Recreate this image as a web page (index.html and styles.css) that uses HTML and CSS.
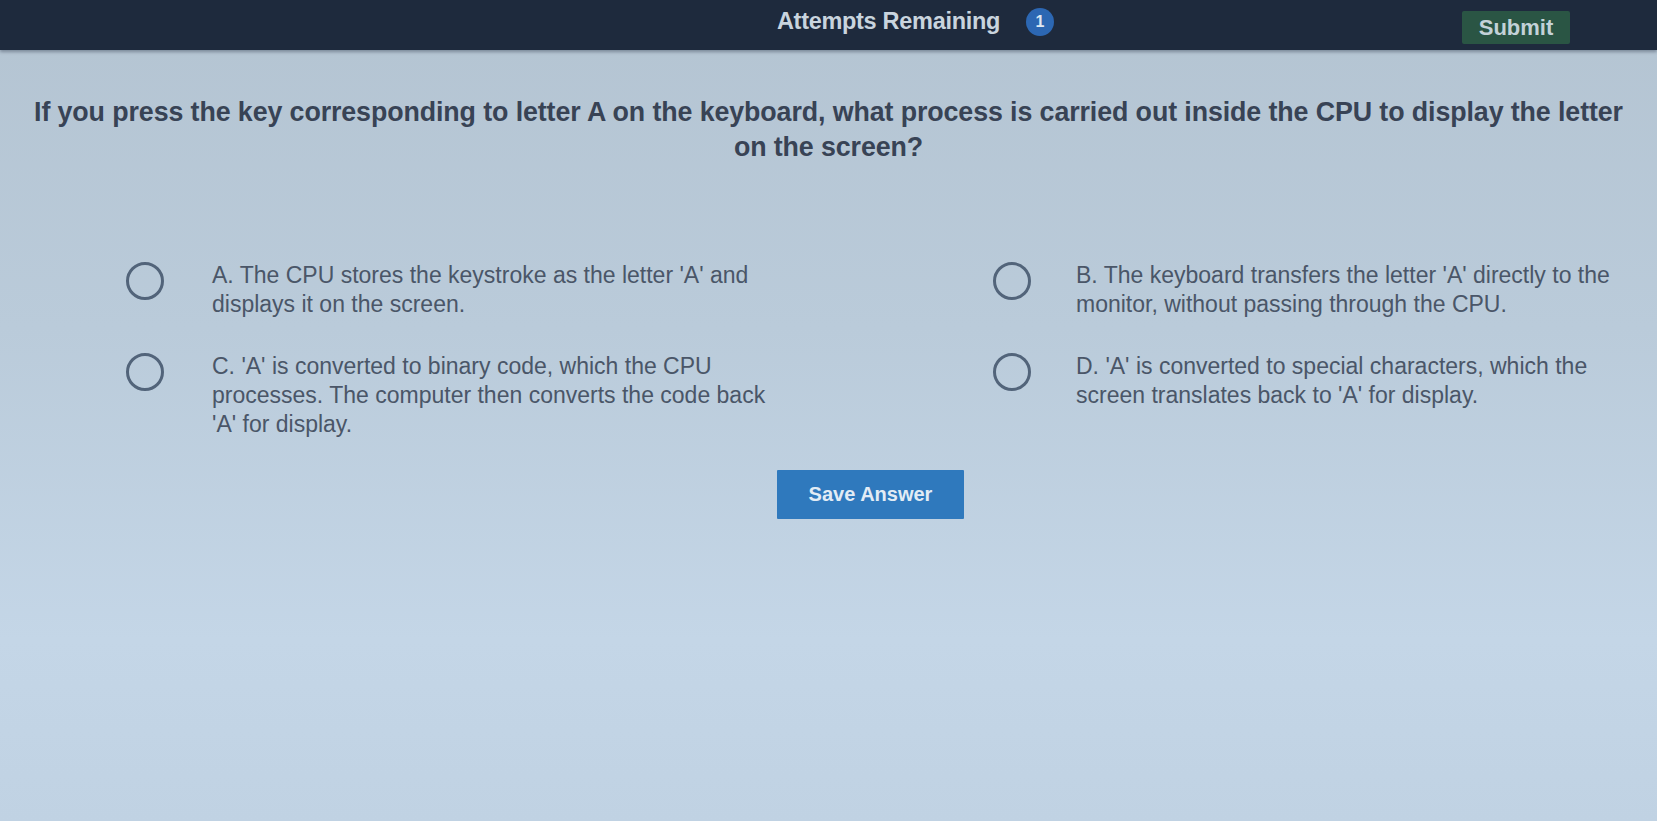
FILE: index.html
```html
<!DOCTYPE html>
<html>
<head>
<meta charset="utf-8">
<link rel="stylesheet" href="styles.css">
</head>
<body>
<header class="topbar">
  <div class="attempts">
    <span class="attempts-label">Attempts Remaining</span>
    <span class="badge">1</span>
  </div>
  <button class="submit">Submit</button>
</header>
<main class="content">
  <h1 class="question">If you press the key corresponding to letter A on the keyboard, what process is carried out inside the CPU to display the letter on the screen?</h1>
  <div class="options">
    <label class="option">
      <span class="radio"></span>
      <span class="opt-text">A. The CPU stores the keystroke as the letter 'A' and displays it on the screen.</span>
    </label>
    <label class="option option-right">
      <span class="radio"></span>
      <span class="opt-text">B. The keyboard transfers the letter 'A' directly to the monitor, without passing through the CPU.</span>
    </label>
    <label class="option">
      <span class="radio"></span>
      <span class="opt-text">C. 'A' is converted to binary code, which the CPU processes. The computer then converts the code back 'A' for display.</span>
    </label>
    <label class="option option-right">
      <span class="radio"></span>
      <span class="opt-text">D. 'A' is converted to special characters, which the screen translates back to 'A' for display.</span>
    </label>
  </div>
  <div class="actions">
    <button class="save">Save Answer</button>
  </div>
</main>
</body>
</html>
```
FILE: styles.css
```css
* { box-sizing: border-box; }
html, body { height: 100%; }
body {
  margin: 0;
  font-family: "Liberation Sans", Arial, sans-serif;
  background: linear-gradient(180deg, #b4c4d2 0%, #bacbda 40%, #c4d6e7 78%, #c0d2e3 100%);
  color: #3b4658;
  overflow: hidden;
}
.topbar {
  height: 50px;
  background: #1e2a3d;
  display: flex;
  align-items: center;
  justify-content: center;
  position: relative;
  box-shadow: 0 2px 3px rgba(20, 30, 50, 0.35);
}
.attempts {
  display: flex;
  align-items: center;
  gap: 26px;
  margin-left: 174px;
  margin-top: -7px;
}
.attempts-label {
  color: #c9d4de;
  font-weight: bold;
  font-size: 23.5px;
  letter-spacing: -0.3px;
}
.badge {
  width: 28px;
  height: 28px;
  border-radius: 50%;
  background: #2c67b3;
  color: #dfe8f2;
  font-weight: bold;
  font-size: 16px;
  display: flex;
  align-items: center;
  justify-content: center;
}
.submit {
  position: absolute;
  right: 87px;
  top: 11px;
  width: 108px;
  height: 33px;
  background: #2a5544;
  color: #c3d2d8;
  font-family: "Liberation Sans", Arial, sans-serif;
  font-weight: bold;
  font-size: 22px;
  border: none;
  border-radius: 2px;
}
.content {
  padding: 45px 20px 0 20px;
}
.question {
  margin: 0 auto;
  max-width: 1610px;
  text-align: center;
  font-size: 26.8px;
  line-height: 35px;
  font-weight: bold;
  color: #384355;
  letter-spacing: -0.1px;
}
.options {
  display: grid;
  grid-template-columns: 867px 640px;
  row-gap: 33px;
  margin: 96px 0 0 106px;
}
.option {
  display: flex;
  align-items: flex-start;
  gap: 48px;
}
.option-right {
  gap: 45px;
}
.radio {
  flex: none;
  width: 38px;
  height: 38px;
  border: 3px solid #52647a;
  border-radius: 50%;
  margin-top: 1px;
}
.opt-text {
  width: 565px;
  font-size: 23px;
  line-height: 29px;
  color: #4a5668;
}
.option-right .opt-text {
  width: 560px;
}
.actions {
  display: flex;
  justify-content: center;
  margin: 31px 0 0 0;
  padding-left: 84px;
}
.save {
  width: 187px;
  height: 49px;
  background: #2f79bd;
  color: #e2ecf5;
  font-family: "Liberation Sans", Arial, sans-serif;
  font-weight: bold;
  font-size: 20px;
  border: none;
  border-radius: 1px;
}
```
